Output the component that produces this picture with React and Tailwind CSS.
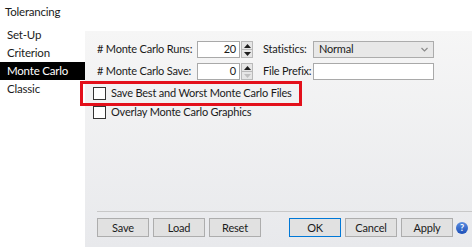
import { useState } from 'react';

const navItems = ["Set-Up", "Criterion", "Monte Carlo", "Classic"];

const Spinner = ({ downDisabled }) => (
  <div className="flex flex-col w-[12px] h-[17px] ml-[1px]">
    <div className="flex-1 flex items-center justify-center border border-[#b9b9b9] bg-[#e6e6e6]">
      <svg width="7" height="4" viewBox="0 0 7 4"><path d="M0 4 L3.5 0 L7 4 Z" fill="#1e1e1e" /></svg>
    </div>
    <div className="flex-1 flex items-center justify-center border border-t-0 border-[#b9b9b9] bg-[#e6e6e6]">
      <svg width="7" height="4" viewBox="0 0 7 4"><path d="M0 0 L3.5 4 L7 0 Z" fill={downDisabled ? "#bfbfbf" : "#1e1e1e"} /></svg>
    </div>
  </div>
);

const Check = ({ label }) => (
  <div className="flex items-center h-[19px] whitespace-nowrap">
    <div className="w-[13px] h-[13px] border border-[#333] bg-white" />
    <span className="ml-[5px]">{label}</span>
  </div>
);

const Btn = ({ children, primary }) => (
  <button className={`w-[52px] h-[19px] flex items-center justify-center bg-[#e1e1e1] border ${primary ? "border-[#0078d7]" : "border-[#adadad]"} leading-none`}>
    {children}
  </button>
);

const App = () => {
  const [active] = useState("Monte Carlo");

  return (
    <div className="w-[474px] h-[247px] flex bg-white text-[11px] tracking-[-0.2px] text-[#1b1b1b] overflow-hidden relative" style={{ fontFamily: 'Lato, "Liberation Sans", sans-serif' }}>
      {/* left nav */}
      <div className="w-[85px] flex flex-col whitespace-nowrap text-[11.5px]">
        <div className="h-[26px] pl-[5px] flex items-center pb-[2px]">Tolerancing</div>
        {navItems.map(item => (
          <div key={item} className={`h-[18px] pl-[7px] flex items-center ${active === item ? "bg-black text-white" : ""}`}>{item}</div>
        ))}
      </div>

      {/* right */}
      <div className="flex-1 pt-[31px] pr-[2px] flex">
        <div className="flex-1 flex flex-col bg-gradient-to-b from-[#f6f6f6] to-[#e8e9ec] pl-[12px] pt-[10px] whitespace-nowrap">
          <div className="flex items-center h-[17px]">
            <span className="w-[100px]">&#35; Monte Carlo Runs:</span>
            <div className="w-[43px] h-[17px] border border-[#a9a9a9] bg-white flex items-center justify-end pr-[3px]">20</div>
            <Spinner />
            <span className="ml-[10px] w-[50px]">Statistics:</span>
            <div className="w-[121px] h-[17px] border border-[#acacac] bg-[#e8e8e8] flex items-center pl-[5px] justify-between pr-[5px]">
              <span>Normal</span>
              <svg width="7" height="5" viewBox="0 0 7 5"><path d="M0.5 1 L3.5 4 L6.5 1" stroke="#8a8a8a" strokeWidth="1.2" fill="none" /></svg>
            </div>
          </div>
          <div className="flex items-center h-[17px] mt-[5px]">
            <span className="w-[100px]">&#35; Monte Carlo Save:</span>
            <div className="w-[43px] h-[17px] border border-[#a9a9a9] bg-white flex items-center justify-end pr-[3px]">0</div>
            <Spinner downDisabled />
            <span className="ml-[10px] w-[50px]">File Prefix:</span>
            <div className="w-[121px] h-[17px] border border-[#a9a9a9] bg-white" />
          </div>
          <div className="mt-[4px] -ml-[4px]">
            <Check label="Save Best and Worst Monte Carlo Files" />
            <Check label="Overlay Monte Carlo Graphics" />
          </div>

          <div className="mt-auto mb-[10px]">
            <div className="h-px bg-[#c8c8c8] mb-[6px]" />
            <div className="flex items-center">
              <div className="flex gap-[4px]">
                <Btn>Save</Btn>
                <Btn>Load</Btn>
                <Btn>Reset</Btn>
              </div>
              <div className="ml-auto flex gap-[4px] items-center pr-[4px]">
                <Btn primary>OK</Btn>
                <Btn>Cancel</Btn>
                <Btn>Apply</Btn>
                <div className="w-[12px] h-[12px] rounded-full bg-gradient-to-b from-[#5b8de0] to-[#1c4fb8] text-white text-[9px] font-bold flex items-center justify-center leading-none -ml-[1px]">?</div>
              </div>
            </div>
          </div>
        </div>
      </div>

      {/* red annotation box */}
      <div className="absolute left-[80px] top-[81px] w-[222px] h-[25px] border-[3px] border-[#e3101b] pointer-events-none" />
    </div>
  );
};

export default App;
